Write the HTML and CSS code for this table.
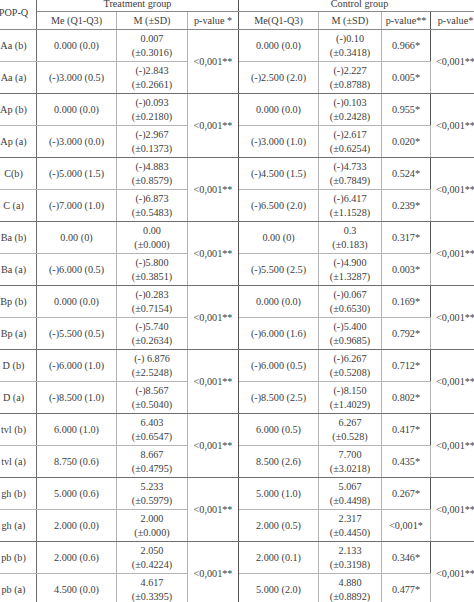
FILE: index.html
```html
<!DOCTYPE html>
<html>
<head>
<meta charset="utf-8">
<link rel="stylesheet" href="styles.css">
</head>
<body>
<table class="stats">
  <colgroup>
    <col class="c-label"><col class="c-me"><col class="c-m"><col class="c-p">
    <col class="c-me"><col class="c-m2"><col class="c-p2"><col class="c-p3">
  </colgroup>
  <thead>
    <tr class="h1">
      <th rowspan="2" class="lbl grp-l">POP-Q</th>
      <th colspan="3" class="grp-r">Treatment group</th>
      <th colspan="4">Control group</th>
    </tr>
    <tr class="h2">
      <th>Me (Q1-Q3)</th>
      <th>M (±SD)</th>
      <th class="grp-r">p-value *</th>
      <th>Me(Q1-Q3)</th>
      <th>M (±SD)</th>
      <th class="grp-r">p-value**</th>
      <th>p-value*</th>
    </tr>
  </thead>
  <tbody>
    <tr class="b"><td class="lbl">Aa (b)</td><td>0.000 (0.0)</td><td>0.007<br>(±0.3016)</td><td rowspan="2" class="grp-r">&lt;0,001**</td><td>0.000 (0.0)</td><td>(-)0.10<br>(±0.3418)</td><td class="grp-r">0.966*</td><td rowspan="2">&lt;0,001**</td></tr>
    <tr class="a"><td class="lbl">Aa (a)</td><td>(-)3.000 (0.5)</td><td>(-)2.843<br>(±0.2661)</td><td>(-)2.500 (2.0)</td><td>(-)2.227<br>(±0.8788)</td><td class="grp-r">0.005*</td></tr>

    <tr class="b"><td class="lbl">Ap (b)</td><td>0.000 (0.0)</td><td>(-)0.093<br>(±0.2180)</td><td rowspan="2" class="grp-r">&lt;0,001**</td><td>0.000 (0.0)</td><td>(-)0.103<br>(±0.2428)</td><td class="grp-r">0.955*</td><td rowspan="2">&lt;0,001**</td></tr>
    <tr class="a"><td class="lbl">Ap (a)</td><td>(-)3.000 (0.0)</td><td>(-)2.967<br>(±0.1373)</td><td>(-)3.000 (1.0)</td><td>(-)2.617<br>(±0.6254)</td><td class="grp-r">0.020*</td></tr>

    <tr class="b"><td class="lbl">C(b)</td><td>(-)5.000 (1.5)</td><td>(-)4.883<br>(±0.8579)</td><td rowspan="2" class="grp-r">&lt;0,001**</td><td>(-)4.500 (1.5)</td><td>(-)4.733<br>(±0.7849)</td><td class="grp-r">0.524*</td><td rowspan="2">&lt;0,001**</td></tr>
    <tr class="a"><td class="lbl">C (a)</td><td>(-)7.000 (1.0)</td><td>(-)6.873<br>(±0.5483)</td><td>(-)6.500 (2.0)</td><td>(-)6.417<br>(±1.1528)</td><td class="grp-r">0.239*</td></tr>

    <tr class="b"><td class="lbl">Ba (b)</td><td>0.00 (0)</td><td>0.00<br>(±0.000)</td><td rowspan="2" class="grp-r">&lt;0,001**</td><td>0.00 (0)</td><td>0.3<br>(±0.183)</td><td class="grp-r">0.317*</td><td rowspan="2">&lt;0,001**</td></tr>
    <tr class="a"><td class="lbl">Ba (a)</td><td>(-)6.000 (0.5)</td><td>(-)5.800<br>(±0.3851)</td><td>(-)5.500 (2.5)</td><td>(-)4.900<br>(±1.3287)</td><td class="grp-r">0.003*</td></tr>

    <tr class="b"><td class="lbl">Bp (b)</td><td>0.000 (0.0)</td><td>(-)0.283<br>(±0.7154)</td><td rowspan="2" class="grp-r">&lt;0,001**</td><td>0.000 (0.0)</td><td>(-)0.067<br>(±0.6530)</td><td class="grp-r">0.169*</td><td rowspan="2">&lt;0,001**</td></tr>
    <tr class="a"><td class="lbl">Bp (a)</td><td>(-)5.500 (0.5)</td><td>(-)5.740<br>(±0.2634)</td><td>(-)6.000 (1.6)</td><td>(-)5.400<br>(±0.9685)</td><td class="grp-r">0.792*</td></tr>

    <tr class="b"><td class="lbl">D (b)</td><td>(-)6.000 (1.0)</td><td>(-) 6.876<br>(±2.5248)</td><td rowspan="2" class="grp-r">&lt;0,001**</td><td>(-)6.000 (0.5)</td><td>(-)6.267<br>(±0.5208)</td><td class="grp-r">0.712*</td><td rowspan="2">&lt;0,001**</td></tr>
    <tr class="a"><td class="lbl">D (a)</td><td>(-)8.500 (1.0)</td><td>(-)8.567<br>(±0.5040)</td><td>(-)8.500 (2.5)</td><td>(-)8.150<br>(±1.4029)</td><td class="grp-r">0.802*</td></tr>

    <tr class="b"><td class="lbl">tvl (b)</td><td>6.000 (1.0)</td><td>6.403<br>(±0.6547)</td><td rowspan="2" class="grp-r">&lt;0,001**</td><td>6.000 (0.5)</td><td>6.267<br>(±0.528)</td><td class="grp-r">0.417*</td><td rowspan="2">&lt;0,001**</td></tr>
    <tr class="a"><td class="lbl">tvl (a)</td><td>8.750 (0.6)</td><td>8.667<br>(±0.4795)</td><td>8.500 (2.6)</td><td>7.700<br>(±3.0218)</td><td class="grp-r">0.435*</td></tr>

    <tr class="b"><td class="lbl">gh (b)</td><td>5.000 (0.6)</td><td>5.233<br>(±0.5979)</td><td rowspan="2" class="grp-r">&lt;0,001**</td><td>5.000 (1.0)</td><td>5.067<br>(±0.4498)</td><td class="grp-r">0.267*</td><td rowspan="2">&lt;0,001**</td></tr>
    <tr class="a"><td class="lbl">gh (a)</td><td>2.000 (0.0)</td><td>2.000<br>(±0.000)</td><td>2.000 (0.5)</td><td>2.317<br>(±0.4450)</td><td class="grp-r">&lt;0,001*</td></tr>

    <tr class="b"><td class="lbl">pb (b)</td><td>2.000 (0.6)</td><td>2.050<br>(±0.4224)</td><td rowspan="2" class="grp-r">&lt;0,001**</td><td>2.000 (0.1)</td><td>2.133<br>(±0.3198)</td><td class="grp-r">0.346*</td><td rowspan="2">&lt;0,001**</td></tr>
    <tr class="a"><td class="lbl">pb (a)</td><td>4.500 (0.0)</td><td>4.617<br>(±0.3395)</td><td>5.000 (2.0)</td><td>4.880<br>(±0.8892)</td><td class="grp-r">0.477*</td></tr>
  </tbody>
</table>
</body>
</html>
```

FILE: styles.css
```css
html, body {
  margin: 0;
  padding: 0;
  background: #ffffff;
  overflow: hidden;
}

body {
  width: 474px;
  height: 602px;
}

.stats {
  border-collapse: collapse;
  table-layout: fixed;
  width: 490px;
  margin-left: -10px;
  margin-top: -5px;
  font-family: "Liberation Serif", "Times New Roman", serif;
  font-size: 10.2px;
  line-height: 13.5px;
  color: #3c3c3c;
}

.c-label { width: 46px; }
.c-me { width: 80px; }
.c-m { width: 71px; }
.c-p { width: 51px; }
.c-m2 { width: 63px; }
.c-p2 { width: 49px; }
.c-p3 { width: 50px; }

.stats th,
.stats td {
  border: 1px solid #b4b4b4;
  padding: 0;
  text-align: center;
  vertical-align: middle;
  font-weight: normal;
  white-space: nowrap;
  overflow: hidden;
}

.stats .h1 { height: 16px; }
.stats .h2 { height: 18px; }

.stats thead th { border-bottom-color: #8a8a8a; }

.stats tbody tr { height: 32px; }

.stats tr.a td { border-bottom: 1px solid #6e6e6e; }
.stats td[rowspan] { border-bottom: 1px solid #6e6e6e; }

.stats .lbl { border-right: 1px solid #6e6e6e; }
.stats .grp-r { border-right: 1px solid #555555; }
.stats .grp-l { border-right: 1px solid #6e6e6e; }
```
